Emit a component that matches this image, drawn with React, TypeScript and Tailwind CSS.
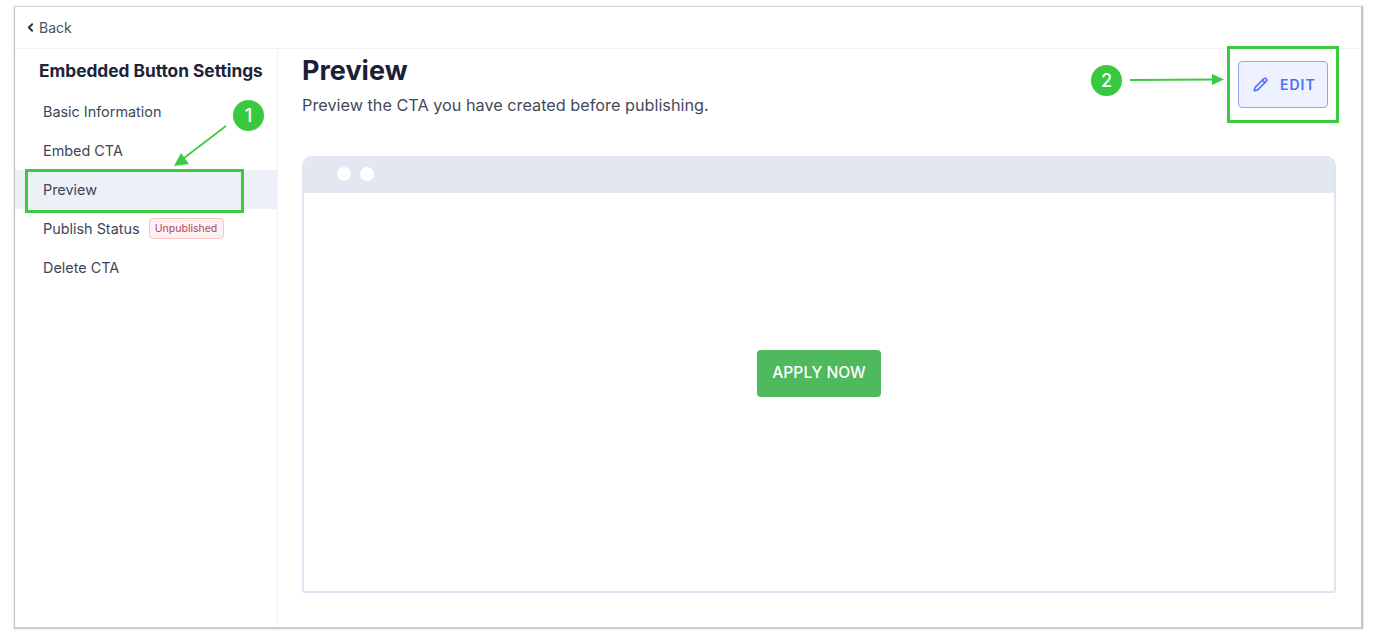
import { ChevronLeft, Pencil } from 'lucide-react'

const navItems = ['Basic Information', 'Embed CTA', 'Preview', 'Publish Status', 'Delete CTA']

function NavItem({ label }: { label: string }) {
  const active = label === 'Preview'
  return (
    <div className={`flex h-[39px] items-center pl-[28px] text-[14.4px] text-[#3f4656] ${active ? 'bg-[#ecf0f7]' : ''}`}>
      {label}
      {label === 'Publish Status' && (
        <span className="ml-[9px] flex h-[21px] w-[75px] items-center justify-center rounded-[4px] border border-[#f8c4c8] bg-[#fff0f1] text-[10.5px] text-[#a94a5c]">
          Unpublished
        </span>
      )}
    </div>
  )
}

function Marker({ n, className }: { n: number; className: string }) {
  return (
    <div className={`absolute flex h-[31px] w-[31px] items-center justify-center rounded-full bg-[#38c93f] text-[18px] font-medium text-white ${className}`}>
      {n}
    </div>
  )
}

export default function App() {
  return (
    <div className="relative h-[635px] w-[1376px] overflow-hidden bg-white pl-[14px] pt-[6px] font-['Inter',sans-serif]">
      <div className="flex h-[623px] w-[1349px] flex-col border-t border-l border-r-2 border-b-2 border-t-[#d8d8d8] border-l-[#c4c4c4] border-r-[#c4c4c4] border-b-[#cfcfcf] bg-white shadow-[0_0_2px_rgba(0,0,0,0.2)]">
        <div className="flex h-[42px] shrink-0 items-center gap-[1px] border-b border-[#eef1f7] pl-[9px] text-[14px] text-[#4b5262]">
          <ChevronLeft className="h-[13px] w-[13px] text-[#2a3040]" strokeWidth={3.5} />
          <span className="ml-[1px]">Back</span>
        </div>
        <div className="flex min-h-0 flex-1">
          <aside className="w-[263px] shrink-0 border-r border-[#f1f3f8]">
            <h2 className="mb-[9px] mt-[9px] pl-[24px] text-[17.3px] leading-[25px] font-bold text-[#1e2338]">
              Embedded Button Settings
            </h2>
            {navItems.map((item) => (
              <NavItem key={item} label={item} />
            ))}
          </aside>
          <main className="flex min-w-0 flex-1 flex-col pl-[24px] pr-[25px]">
            <div className="flex h-[107px] shrink-0 justify-between">
              <div>
                <h1 className="mt-[4px] text-[27px] leading-[36px] font-bold text-[#1a2036]">Preview</h1>
                <p className="mt-[4px] text-[16.25px] leading-[24px] text-[#434a5a]">
                  Preview the CTA you have created before publishing.
                </p>
              </div>
              <button className="mr-[8px] mt-[12px] flex h-[47px] w-[90px] items-center gap-[12px] rounded-[4px] border border-[#93a5fa] bg-[#eef2fe] pb-[1px] pl-[14px] text-[14px] font-semibold tracking-[1px] text-[#4f6ef7]">
                <Pencil className="h-[15px] w-[15px]" strokeWidth={2.5} />
                EDIT
              </button>
            </div>
            <div className="flex h-[437px] flex-col overflow-hidden rounded-t-[10px] rounded-b-[3px] border-2 border-[#dfe4f2]">
              <div className="flex h-[35px] shrink-0 items-center gap-[9px] bg-[#e2e7f1] pb-[3px] pl-[33px]">
                <span className="h-[14px] w-[14px] rounded-full bg-white" />
                <span className="h-[14px] w-[14px] rounded-full bg-white" />
              </div>
              <div className="flex flex-1 items-center justify-center pb-[38px]">
                <button className="h-[47px] w-[124px] rounded-[4px] bg-[#4fb95d] text-[15.6px] font-medium text-white">
                  APPLY NOW
                </button>
              </div>
            </div>
          </main>
        </div>
      </div>

      {/* annotations on top of the screenshot */}
      <div className="absolute left-[25px] top-[169px] h-[44px] w-[219px] border-[3px] border-[#3ccb40]" />
      <div className="absolute left-[1227px] top-[46px] h-[77px] w-[112px] border-[3px] border-[#3ccb40]" />
      <Marker n={1} className="left-[233px] top-[100px]" />
      <Marker n={2} className="left-[1091px] top-[65px]" />
      <svg className="absolute left-0 top-0 h-[635px] w-[1376px]" viewBox="0 0 1376 635" fill="none">
        <path d="M226 126 L184 158" stroke="#3ccb40" strokeWidth="1.8" />
        <path d="M174 166 L181 153 L189 164 Z" fill="#3ccb40" />
        <path d="M1130 80 L1214 79.5" stroke="#3ccb40" strokeWidth="1.8" />
        <path d="M1224 79.5 L1212 74 L1212 85 Z" fill="#3ccb40" />
      </svg>
    </div>
  )
}
